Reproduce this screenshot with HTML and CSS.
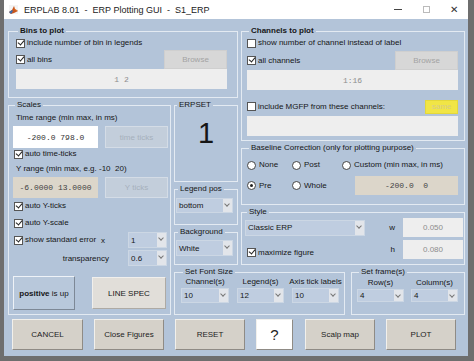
FILE: index.html
```html
<!DOCTYPE html>
<html lang="en">
<head>
    <meta charset="UTF-8">
    <title>ERPLAB 8.01 - ERP Plotting GUI - S1_ERP</title>
    <link rel="stylesheet" href="styles.css">
</head>
<body>
<div class="window">
    <div class="titlebar">
        <svg class="app-icon" width="9" height="9" viewBox="0 0 9 9">
            <rect width="9" height="9" fill="#f4f4f4"/>
            <polygon points="0,7 3,5 5,1 6,4 9,6 5,8 2,9" fill="#c8561e"/>
            <polygon points="5,1 6,4 9,6 6,5" fill="#f08a2c"/>
            <polygon points="0,7 3,5 4,6 2,9" fill="#3a6fb0"/>
        </svg>
        <span class="title">ERPLAB 8.01  -  ERP Plotting GUI  -  S1_ERP</span>
        <div class="controls">
            <span class="ctl"><span class="min"></span></span>
            <span class="ctl"><span class="max"></span></span>
            <span class="ctl close">&#x2715;</span>
        </div>
    </div>

    <div class="client">
        <div class="panels">
            <!-- bins -->
            <fieldset class="panel bins">
                <legend class="bold">Bins to plot</legend>
                <label class="check"><span class="box on"></span>include number of bin in legends</label>
                <div class="row">
                    <label class="check"><span class="box on"></span>all bins</label>
                    <span class="btn off browse">Browse</span>
                </div>
                <div class="field light mono">1 2</div>
            </fieldset>

            <!-- channels -->
            <fieldset class="panel chans">
                <legend class="bold">Channels to plot</legend>
                <label class="check"><span class="box"></span>show number of channel instead of label</label>
                <div class="row">
                    <label class="check"><span class="box on"></span>all channels</label>
                    <span class="btn off browse">Browse</span>
                </div>
                <div class="field light mono">1:16</div>
                <div class="row mgfp">
                    <label class="check"><span class="box"></span>include MGFP from these channels:</label>
                    <span class="btn same">same</span>
                </div>
                <div class="field light"></div>
            </fieldset>

            <!-- scales -->
            <fieldset class="panel scales">
                <legend>Scales</legend>
                <div class="caption">Time range (min max, in ms)</div>
                <div class="pair">
                    <div class="field white mono">-200.0 798.0</div>
                    <span class="btn ghost">time ticks</span>
                </div>
                <label class="check"><span class="box on"></span>auto time-ticks</label>
                <div class="caption y">Y range (min max, e.g. -10&nbsp;&nbsp;20)</div>
                <div class="pair low">
                    <div class="field beige mono">-6.0000 13.0000</div>
                    <span class="btn ghost">Y ticks</span>
                </div>
                <label class="check yt"><span class="box on"></span>auto Y-ticks</label>
                <label class="check ys"><span class="box on"></span>auto Y-scale</label>
                <div class="sem">
                    <label class="check"><span class="box on"></span>show standard error</label>
                    <span class="times">x</span>
                    <div class="select"><span>1</span><i></i></div>
                </div>
                <div class="transp">
                    <span>transparency</span>
                    <div class="select"><span>0.6</span><i></i></div>
                </div>
                <div class="spec">
                    <span class="btn raised"><b>positive</b>&nbsp;is up</span>
                    <span class="btn linespec">LINE SPEC</span>
                </div>
            </fieldset>

            <!-- erpset -->
            <fieldset class="panel erpset">
                <legend>ERPSET</legend>
                <div class="bignum">1</div>
            </fieldset>

            <fieldset class="panel legendpos">
                <legend>Legend pos</legend>
                <div class="select"><span>bottom</span><i></i></div>
            </fieldset>

            <fieldset class="panel bgpanel">
                <legend>Background</legend>
                <div class="select"><span>White</span><i></i></div>
            </fieldset>

            <!-- baseline -->
            <fieldset class="panel base">
                <legend>Baseline Correction (only for plotting purpose)</legend>
                <div class="radios">
                    <label class="opt"><span class="radio"></span>None</label>
                    <label class="opt"><span class="radio"></span>Post</label>
                    <label class="opt"><span class="radio"></span>Custom (min max, in ms)</label>
                </div>
                <div class="radios second">
                    <label class="opt"><span class="radio on"></span>Pre</label>
                    <label class="opt"><span class="radio"></span>Whole</label>
                    <div class="field beige mono">-200.0&nbsp;&nbsp;0</div>
                </div>
            </fieldset>

            <!-- style -->
            <fieldset class="panel style">
                <legend>Style</legend>
                <div class="stylegrid">
                    <div class="select wide"><span>Classic ERP</span><i></i></div>
                    <span class="dim">w</span>
                    <div class="field light">0.050</div>
                    <label class="check maxi"><span class="box on"></span>maximize figure</label>
                    <span class="dim">h</span>
                    <div class="field light">0.080</div>
                </div>
            </fieldset>

            <!-- font size -->
            <fieldset class="panel fonts">
                <legend>Set Font Size</legend>
                <div class="trio">
                    <span>Channel(s)</span>
                    <span>Legend(s)</span>
                    <span>Axis tick labels</span>
                    <div class="select"><span>10</span><i></i></div>
                    <div class="select"><span>12</span><i></i></div>
                    <div class="select"><span>10</span><i></i></div>
                </div>
            </fieldset>

            <!-- frames -->
            <fieldset class="panel frames">
                <legend>Set frame(s)</legend>
                <div class="duo">
                    <span>Row(s)</span>
                    <span>Column(s)</span>
                    <div class="select"><span>4</span><i></i></div>
                    <div class="select"><span>4</span><i></i></div>
                </div>
            </fieldset>
        </div>

        <div class="actions">
            <span class="btn push">CANCEL</span>
            <span class="btn push">Close Figures</span>
            <span class="btn push">RESET</span>
            <span class="btn push help">?</span>
            <span class="btn push scalp">Scalp map</span>
            <span class="btn push">PLOT</span>
        </div>
    </div>
</div>
</body>
</html>
```

FILE: styles.css
```css
* {
    box-sizing: border-box;
}
body {
    margin: 0;
    background: #6e6e6e;
    font-family: "Liberation Sans", Arial, sans-serif;
    font-size: 8px;
    color: #161616;
}
.window {
    margin-left: 4px;
    width: 464px;
    height: 356px;
    background: #b3c4d9;
    display: flex;
    flex-direction: column;
}
.titlebar {
    height: 19px;
    background: #fff;
    display: flex;
    align-items: center;
    padding-left: 5px;
}
.app-icon {
    margin-right: 6px;
}
.title {
    font-size: 9px;
    white-space: pre;
    color: #222;
}
.controls {
    margin-left: auto;
    display: flex;
}
.ctl {
    width: 28px;
    height: 19px;
    display: flex;
    align-items: center;
    justify-content: center;
    color: #333;
}
.ctl .min {
    width: 8px;
    border-top: 1px solid #444;
}
.ctl .max {
    width: 7px;
    height: 7px;
    border: 1px solid #bbb;
}
.ctl.close {
    font-size: 10px;
}

.client {
    flex: 1;
    padding: 7px 3px 6px 4px;
    display: flex;
    flex-direction: column;
}
.panels {
    display: grid;
    grid-template-columns: 163px 64px 104px 117px;
    grid-template-rows: 72px 41px 39px 21px 18px 38px 48px;
    gap: 2px 3px;
    grid-template-areas:
        "bins bins chans chans"
        "scales erpset chans chans"
        "scales erpset base base"
        "scales legendpos base base"
        "scales legendpos style style"
        "scales bgpanel style style"
        "scales fonts fonts frames";
}
.panel {
    margin: 0;
    padding: 0;
    min-width: 0;
    border: 1px solid #e3eaf2;
    display: flex;
    flex-direction: column;
}
.panel legend {
    padding: 0 2px;
    margin-left: 2px;
    line-height: 10px;
}
.bold {
    font-weight: bold;
}
.bins { grid-area: bins; padding: 2px 10px 0 7px; }
.chans { grid-area: chans; padding: 2px 6px 0 5px; }
.scales { grid-area: scales; padding: 0 2px 0 4px; }
.erpset { grid-area: erpset; }
.legendpos { grid-area: legendpos; padding: 0 4px 0 1px; }
.bgpanel { grid-area: bgpanel; padding: 0 4px 0 1px; }
.base { grid-area: base; padding: 0 6px 0 5px; }
.style { grid-area: style; padding: 0 1px 0 3px; }
.fonts { grid-area: fonts; padding: 0 5px 0 6px; }
.frames { grid-area: frames; margin-left: 3px; padding: 0 6px 0 5px; }

/* checkbox + radio */
.check, .opt {
    display: flex;
    align-items: center;
    height: 10px;
    line-height: 10px;
    white-space: nowrap;
}
.box {
    width: 9px;
    height: 9px;
    background: #fff;
    border: 1px solid #555;
    margin-right: 2px;
    position: relative;
    flex: none;
}
.box.on::after {
    content: "";
    position: absolute;
    left: 1px;
    top: 0;
    width: 5px;
    height: 3px;
    border-left: 1px solid #222;
    border-bottom: 1px solid #222;
    transform: rotate(-50deg);
}
.radio {
    width: 9px;
    height: 9px;
    border-radius: 50%;
    background: #fff;
    border: 1px solid #444;
    margin-right: 3px;
    position: relative;
    flex: none;
}
.radio.on::after {
    content: "";
    position: absolute;
    left: 2px;
    top: 2px;
    width: 3px;
    height: 3px;
    border-radius: 50%;
    background: #222;
}

/* buttons & fields */
.btn {
    display: flex;
    align-items: center;
    justify-content: center;
    white-space: nowrap;
}
.btn.off {
    background: #d7d7d7;
    color: #a3a3a3;
    border: 1px solid #cfcfcf;
}
.browse {
    width: 63px;
    height: 19px;
}
.btn.same {
    width: 33px;
    height: 14px;
    background: #f1e545;
    color: #d6cc8a;
    border: 1px solid #e4d83a;
}
.btn.ghost {
    width: 63px;
    background: #c3cedb;
    color: #a6b0bc;
    border: 1px solid #d4dce6;
}
.field {
    height: 20px;
    display: flex;
    align-items: center;
    justify-content: center;
}
.mono {
    font-family: "Liberation Mono", "Courier New", monospace;
}
.field.light {
    background: #eeeeee;
    color: #8d8d8d;
}
.field.white {
    background: #fff;
    color: #333;
}
.field.beige {
    background: #dcd6ca;
    color: #444;
}
.row {
    display: flex;
    align-items: center;
    justify-content: space-between;
}
.bins .row {
    margin-top: 2px;
}
.chans .row {
    margin-top: 3px;
}
.chans .row.mgfp {
    margin-top: 9px;
    height: 15px;
}
.chans .mgfp + .field {
    margin-top: 2px;
}

/* select */
.select {
    display: flex;
    align-items: center;
    height: 15px;
    background: #bfcde0;
    border: 1px solid #ccd7e4;
}
.select span {
    flex: 1;
    padding-left: 2px;
}
.select i {
    width: 9px;
    align-self: stretch;
    background: #e2e5ea;
    position: relative;
}
.select i::after {
    content: "";
    position: absolute;
    left: 2px;
    top: 3px;
    width: 3px;
    height: 3px;
    border-right: 1px solid #777;
    border-bottom: 1px solid #777;
    transform: rotate(45deg);
}

/* scales */
.caption {
    margin-top: 3px;
    padding-left: 3px;
    line-height: 10px;
}
.caption.y {
    margin-top: 5px;
}
.pair {
    display: flex;
    justify-content: space-between;
    margin-top: 3px;
    height: 22px;
}
.pair.low {
    height: 21px;
}
.pair .field {
    width: 85px;
    height: auto;
}
.scales .check {
    margin-left: 1px;
    margin-top: 1px;
}
.scales .check.yt { margin-top: 3px; }
.scales .check.ys { margin-top: 7px; }
.sem {
    display: flex;
    align-items: center;
    margin-top: 4px;
    height: 16px;
}
.sem .check {
    width: 87px;
    margin-top: 0;
}
.sem .times {
    width: 27px;
}
.sem .select, .transp .select {
    width: 39px;
    height: 16px;
}
.transp {
    display: flex;
    align-items: center;
    justify-content: flex-end;
    margin-top: 2px;
    padding-right: 1px;
    gap: 19px;
}
.spec {
    display: flex;
    align-items: center;
    gap: 17px;
    margin-top: 10px;
}
.btn.raised {
    width: 62px;
    height: 34px;
    background: #b8c8db;
    border: 1px solid;
    border-color: #eef2f7 #7d8896 #7d8896 #eef2f7;
}
.btn.linespec {
    width: 74px;
    height: 32px;
    background: #e1ded9;
    border: 1px solid;
    border-color: #f1efec #aeaaa4 #aeaaa4 #f1efec;
}

/* erpset column */
.bignum {
    margin-top: 9px;
    text-align: center;
    font-size: 29px;
    line-height: 29px;
}
.legendpos .select {
    margin-top: 4px;
}
.bgpanel .select {
    margin-top: 3px;
    height: 16px;
}

/* baseline */
.radios {
    display: grid;
    grid-template-columns: 45px 50px 1fr;
    align-items: center;
    margin-top: 7px;
}
.radios.second {
    margin-top: 6px;
    height: 19px;
}
.radios .field {
    width: 103px;
    height: 19px;
    justify-self: end;
}

/* style */
.stylegrid {
    display: grid;
    grid-template-columns: 120px 1fr 60px;
    grid-template-rows: 19px 19px;
    row-gap: 3px;
    align-items: center;
    margin-top: 1px;
}
.stylegrid .select {
    height: 16px;
}
.stylegrid .dim {
    justify-self: end;
    margin-right: 8px;
}
.stylegrid .field {
    height: 19px;
}
.stylegrid .check.maxi {
    margin-top: 6px;
    margin-left: 2px;
}

/* font size + frames */
.trio, .duo {
    display: grid;
    grid-template-columns: 48px 47px 47px;
    column-gap: 8px;
    row-gap: 1px;
    text-align: center;
    line-height: 10px;
}
.trio span, .duo span {
    white-space: nowrap;
    justify-self: center;
}
.duo {
    grid-template-columns: 47px 47px;
    column-gap: 7px;
    margin-top: 1px;
}
.duo .select {
    height: 13px;
}
.trio .select, .duo .select {
    text-align: left;
}

/* bottom action row */
.actions {
    display: flex;
    gap: 11px;
    margin-top: 4px;
    padding-left: 4px;
}
.btn.push {
    width: 70px;
    height: 31px;
    background: #d5d1c9;
    border: 1px solid;
    border-color: #f2f0eb #8f8b85 #8f8b85 #f2f0eb;
    color: #222;
}
.btn.push:first-child {
    width: 71px;
}
.btn.help {
    width: 37px;
    background: #fff;
    font-size: 15px;
}
.btn.scalp {
    margin-left: 1px;
}
```
